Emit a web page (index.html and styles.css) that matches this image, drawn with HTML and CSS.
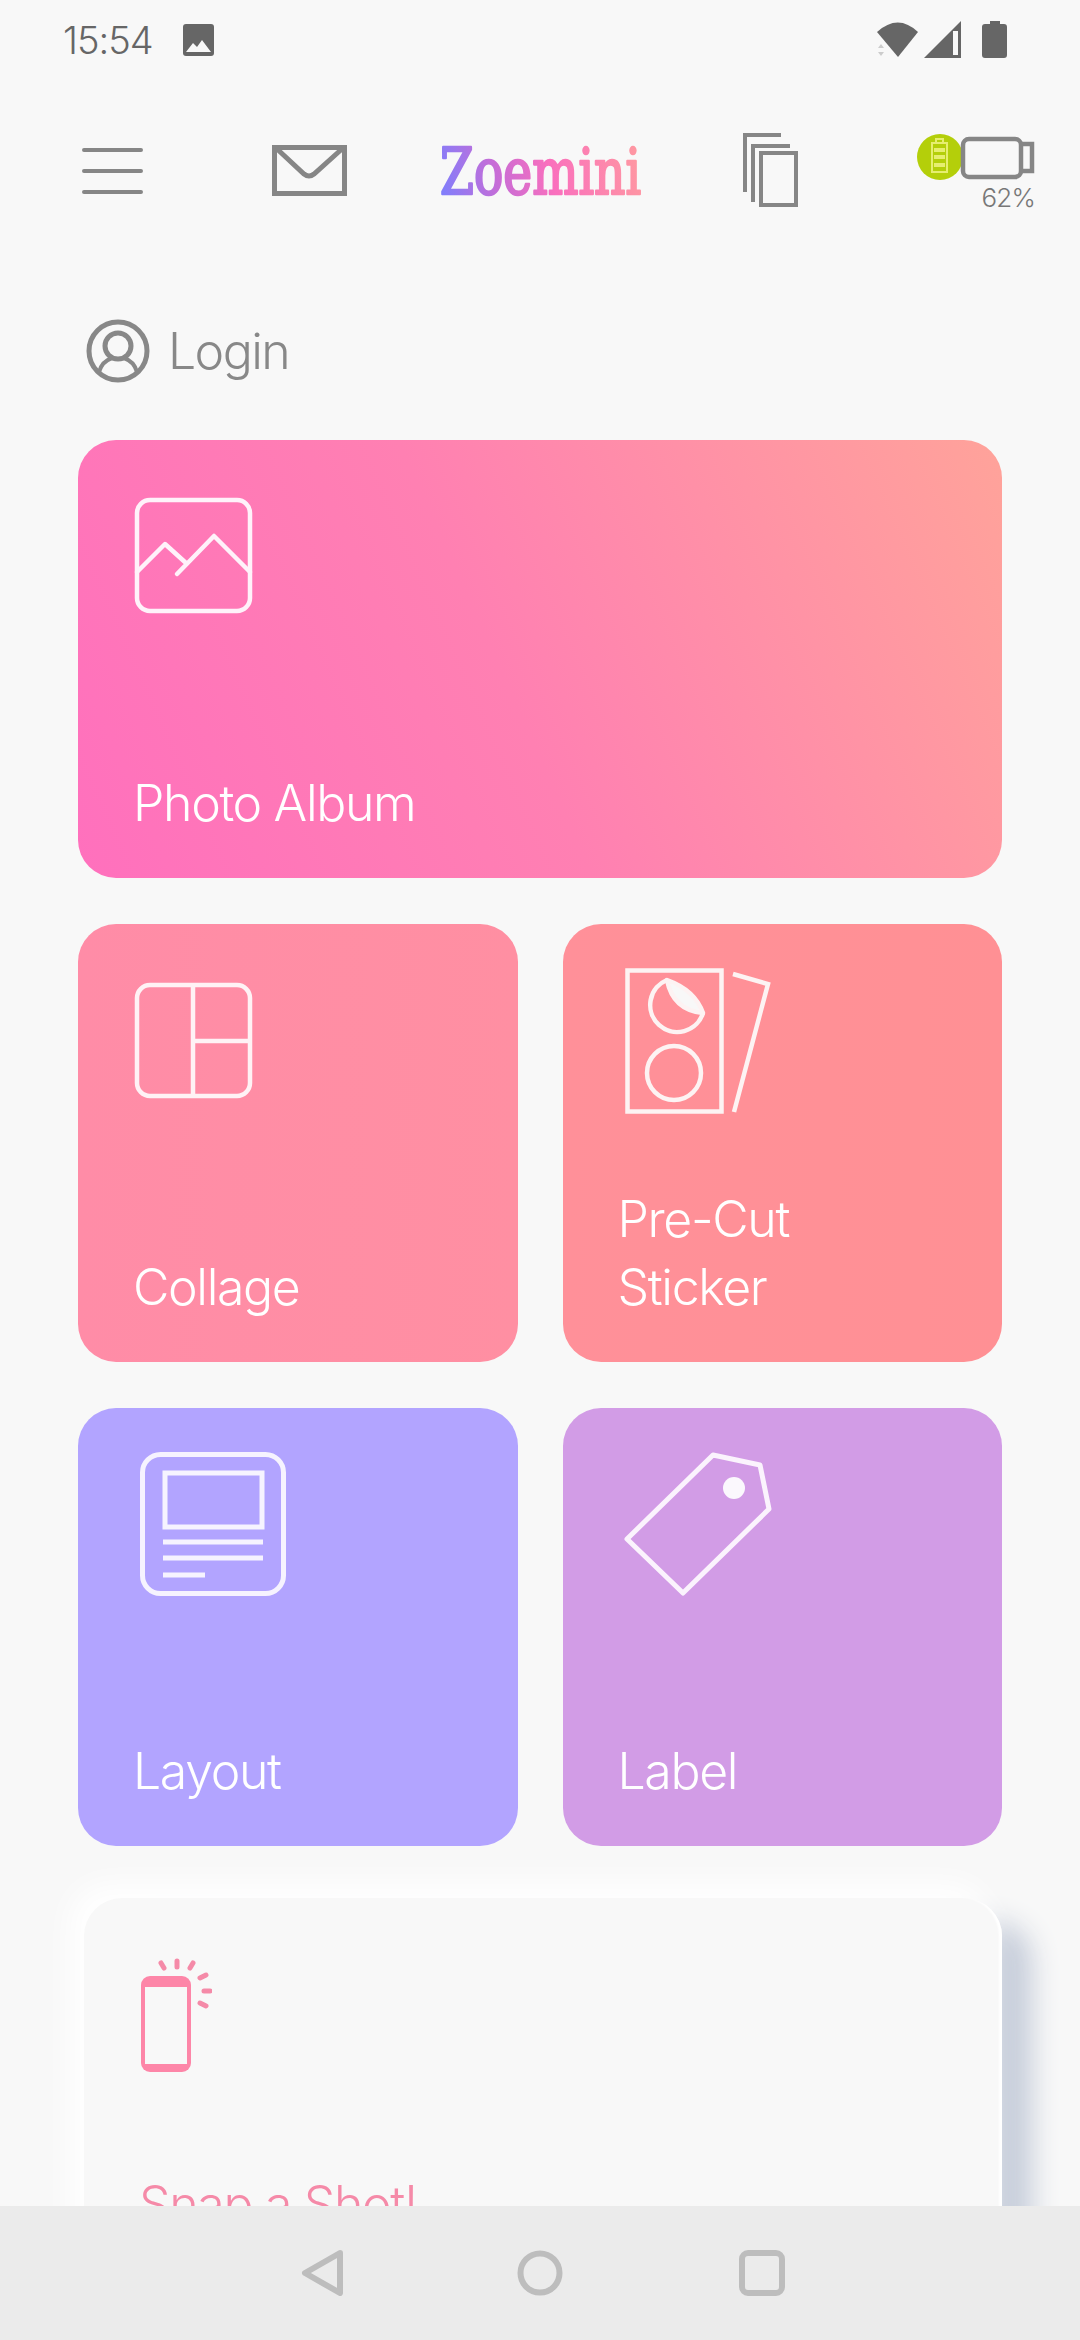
FILE: index.html
```html
<!DOCTYPE html>
<html lang="en">
<head>
<meta charset="utf-8">
<title>Zoemini</title>
<link rel="stylesheet" href="styles.css">
</head>
<body>
<div class="screen">
  <main class="main">
    <div class="status">
      <div class="status-left">
        <span class="time">15:54</span>
        <svg class="ic-gallery" viewBox="0 0 31 32" width="31" height="32"><rect width="31" height="32" rx="3" fill="#666"/><path d="M3 28 L10 19 L14 23 L19 16 L28 28 Z" fill="#f8f8f8"/></svg>
      </div>
      <svg class="ic-sys" viewBox="870 16 140 46" width="140" height="46">
        <path d="M876 32 Q897 13 917 32 L897 57 Z" fill="#666"/>
        <path d="M877 48 L880 44 L883 48 Z M877 52 L883 52 L880 56 Z" fill="#ccc"/>
        <path d="M923 58 L960 21 L960 58 Z" fill="#666"/>
        <rect x="952" y="31" width="5" height="24" fill="#f8f8f8"/>
        <path d="M989 24 V21 H999 V24 H1003 Q1006 24 1006 27 V55 Q1006 58 1003 58 H984 Q981 58 981 55 V27 Q981 24 984 24 Z" fill="#666"/>
      </svg>
    </div>

    <header class="topbar">
      <svg class="ic" viewBox="0 0 61 82" width="61" height="82"><path d="M2 20 H59 M2 41 H59 M2 62 H59" stroke="#868686" stroke-width="4" stroke-linecap="round" fill="none"/></svg>
      <svg class="ic" viewBox="0 0 75 82" width="75" height="82"><rect x="2.5" y="17.5" width="70" height="46" fill="none" stroke="#868686" stroke-width="5"/><path d="M4 18 L32 44 Q37 48 42 44 L71 18" fill="none" stroke="#868686" stroke-width="5"/></svg>
      <svg class="logo" viewBox="0 0 205 82" width="205" height="82" role="img" aria-label="Zoemini">
        <defs><linearGradient id="logoGrad" gradientUnits="userSpaceOnUse" x1="0" y1="70" x2="205" y2="20"><stop offset="0" stop-color="#7a80ff"/><stop offset="0.3" stop-color="#c86cd6"/><stop offset="0.55" stop-color="#fa70bd"/><stop offset="1" stop-color="#ff9aa0"/></linearGradient></defs>
        <text class="logo-text" x="2" y="64" textLength="201" lengthAdjust="spacingAndGlyphs" fill="url(#logoGrad)" stroke="url(#logoGrad)">Zoemini</text>
      </svg>
      <svg class="ic" viewBox="0 0 55 82" width="55" height="82"><g fill="none" stroke="#868686" stroke-width="4"><rect x="18" y="23" width="35" height="52"/><path d="M10 72 V16 H47"/><path d="M2 62 V5 H38"/></g></svg>
      <svg class="ic" viewBox="0 0 118 82" width="118" height="82">
        <circle cx="23" cy="27" r="23" fill="#b4cf0a"/>
        <g fill="none" stroke="#e6ee70" stroke-width="2"><rect x="15" y="13" width="15" height="29" /><rect x="19" y="9" width="7" height="4"/></g>
        <path d="M17 20 H28 M17 27 H28 M17 35 H28" stroke="#e6ee70" stroke-width="4"/>
        <rect x="46" y="9" width="58" height="38" rx="6" fill="#f8f8f8" stroke="#868686" stroke-width="4.5"/>
        <path d="M104 14 H115 V41 H104" fill="none" stroke="#868686" stroke-width="4.5"/>
        <text class="pct" x="118" y="77" text-anchor="end">62%</text>
      </svg>
    </header>

    <div class="login">
      <svg viewBox="0 0 64 64" width="64" height="64"><g fill="none" stroke="#888" stroke-width="5"><circle cx="32" cy="32" r="29"/><circle cx="32" cy="27" r="13"/><path d="M13 53 C15 46 20 41 26 39 M51 53 C49 46 44 41 38 39" stroke-width="4"/></g></svg>
      <span class="login-text">Login</span>
    </div>

    <section class="grid">
      <a class="card card-album">
        <svg class="card-ic" viewBox="0 0 152 146" width="152" height="146"><g fill="none" stroke="#fff2fa" stroke-width="4.5" stroke-linecap="round" stroke-linejoin="round"><rect x="3" y="16" width="113" height="111" rx="13"/><path d="M3 88 L31 60 L52 79 M43 90 L80 52 L116 88"/></g></svg>
        <span class="card-label">Photo Album</span>
      </a>
      <a class="card card-collage">
        <svg class="card-ic" viewBox="0 0 152 146" width="152" height="146"><g fill="none" stroke="#fff2f5" stroke-width="4.5"><rect x="3" y="17" width="113" height="111" rx="13"/><path d="M59 17 V128 M59 73 H116"/></g></svg>
        <span class="card-label">Collage</span>
      </a>
      <a class="card card-sticker">
        <svg class="card-ic" viewBox="0 0 152 146" width="152" height="146"><g fill="none" stroke="#fdf3f3" stroke-width="4.5"><rect x="8.5" y="2.5" width="94" height="141"/><circle cx="55" cy="105" r="27"/><path d="M48 12 A27 27 0 1 0 84 45"/><path d="M48 12 Q54 42 84 45 Q76 22 48 12 Z" fill="#f8f8f8" stroke-linejoin="round"/><path d="M114 6 L149 16 L115 144"/></g></svg>
        <span class="card-label">Pre-Cut<br>Sticker</span>
      </a>
      <a class="card card-layout">
        <svg class="card-ic" viewBox="0 0 152 146" width="152" height="146"><g fill="none" stroke="#f6f3ff" stroke-width="5"><rect x="8.5" y="2.5" width="141" height="139" rx="18"/><rect x="31" y="21" width="97" height="54"/><path d="M29 90 H129 M29 106 H129 M29 123 H71"/></g></svg>
        <span class="card-label">Layout</span>
      </a>
      <a class="card card-label-tile">
        <svg class="card-ic" viewBox="0 0 152 146" width="152" height="146"><path d="M94 3 L141 13 L150 57 L64 141 L8 87 Z" fill="none" stroke="#fbf3fd" stroke-width="5" stroke-linejoin="round"/><circle cx="115" cy="36" r="11" fill="#fbf8fd"/></svg>
        <span class="card-label">Label</span>
      </a>
    </section>

    <a class="snap">
      <svg class="snap-ic" viewBox="0 0 71 115" width="71" height="115">
        <rect x="0" y="19" width="50" height="96" rx="9" fill="#fd86a8"/>
        <rect x="4" y="30" width="42" height="77" fill="#f8f8f8"/>
        <path d="M20 6 L23 11 M36 4 V10 M52 6 L49 11 M65 18 L59 21 M69 34 H63 M65 49 L59 46" stroke="#f58aa8" stroke-width="5" stroke-linecap="round" fill="none"/>
      </svg>
      <span class="snap-label">Snap a Shot!</span>
    </a>
  </main>

  <nav class="navbar">
    <svg viewBox="0 0 46 46" width="46" height="46"><path d="M41 3 L6 23 L41 43 Z" fill="none" stroke="#bdbdbd" stroke-width="6" stroke-linejoin="round"/></svg>
    <svg viewBox="0 0 46 46" width="46" height="46"><circle cx="23" cy="23" r="19.5" fill="none" stroke="#bdbdbd" stroke-width="6"/></svg>
    <svg class="nav-square" viewBox="0 0 46 46" width="46" height="46"><rect x="3" y="3" width="40" height="40" rx="6" fill="none" stroke="#bdbdbd" stroke-width="6"/></svg>
  </nav>
</div>
</body>
</html>
```
FILE: styles.css
```css
* { box-sizing: border-box; }
html, body { margin: 0; padding: 0; }
body { background: #f8f8f8; font-family: Inter, "Liberation Sans", sans-serif; font-weight: 300; }
svg { display: block; flex: none; }

.screen { width: 1080px; height: 2340px; display: flex; flex-direction: column; overflow: hidden; background: #f8f8f8; }
.main { flex: 1; min-height: 0; overflow: hidden; }

.status { height: 80px; display: flex; justify-content: space-between; align-items: flex-start; padding: 0 69px 0 63px; }
.status-left { display: flex; align-items: center; gap: 30px; padding-top: 22px; height: 58px; }
.time { font-size: 38px; line-height: 38px; color: #666; letter-spacing: -1px; }
.ic-sys { margin-top: 16px; }

.topbar { display: grid; grid-template-columns: 190px 166px 305px 174px 118px; margin-top: 50px; padding-left: 82px; height: 82px; }
.logo { overflow: visible; }
.logo-text { font-family: "DejaVu Serif", serif; font-weight: 400; font-size: 64px; stroke-width: 2.6px; stroke-linejoin: round; }
.pct { font-family: Inter, "Liberation Sans", sans-serif; font-weight: 300; font-size: 26px; fill: #777; letter-spacing: -0.8px; }

.login { display: flex; align-items: center; gap: 18px; margin-top: 107px; padding-left: 86px; height: 64px; }
.login-text { font-size: 50px; line-height: 64px; color: #888; letter-spacing: -1.6px; }

.grid { display: grid; grid-template-columns: 1fr 1fr; column-gap: 45px; row-gap: 46px; grid-auto-rows: 438px; width: 924px; margin: 57px 0 0 78px; }
.card { display: flex; flex-direction: column; justify-content: space-between; padding: 44px 55px 41px; border-radius: 38px; color: #fff; }
.card-ic { overflow: visible; margin-left: 1px; }
.card-label { font-size: 50px; line-height: 68px; letter-spacing: -1.35px; }
.card-album { grid-column: span 2; background: linear-gradient(66deg, #ff70bd, #ff80b2 46%, #ffa39a); }
.card-collage { background: linear-gradient(to right, #ff8ca7, #ff8fa2); }
.card-sticker { background: linear-gradient(to right, #ff9099, #ff9094); }
.card-layout { background: #b2a4ff; }
.card-label-tile { background: #d29ce6; }

.snap { display: block; width: 918px; height: 381px; margin: 52px 0 0 84px; padding: 59px 55px 0; border-radius: 38px; background: #f8f8f8; box-shadow: inset -4px 0 2px -1px #fff, -14px -14px 30px #fff, 30px 24px 28px #c6cdda; }
.snap-ic { margin: 0 0 98px 2px; }
.snap-label { display: block; font-size: 50px; line-height: 68px; color: #f58aa8; letter-spacing: -1.35px; }

.navbar { height: 134px; flex: none; display: flex; justify-content: flex-start; align-items: flex-start; gap: 172px; padding: 44px 0 0 299px; background: #ebebeb; }
.nav-square { margin-left: 4px; }
```
